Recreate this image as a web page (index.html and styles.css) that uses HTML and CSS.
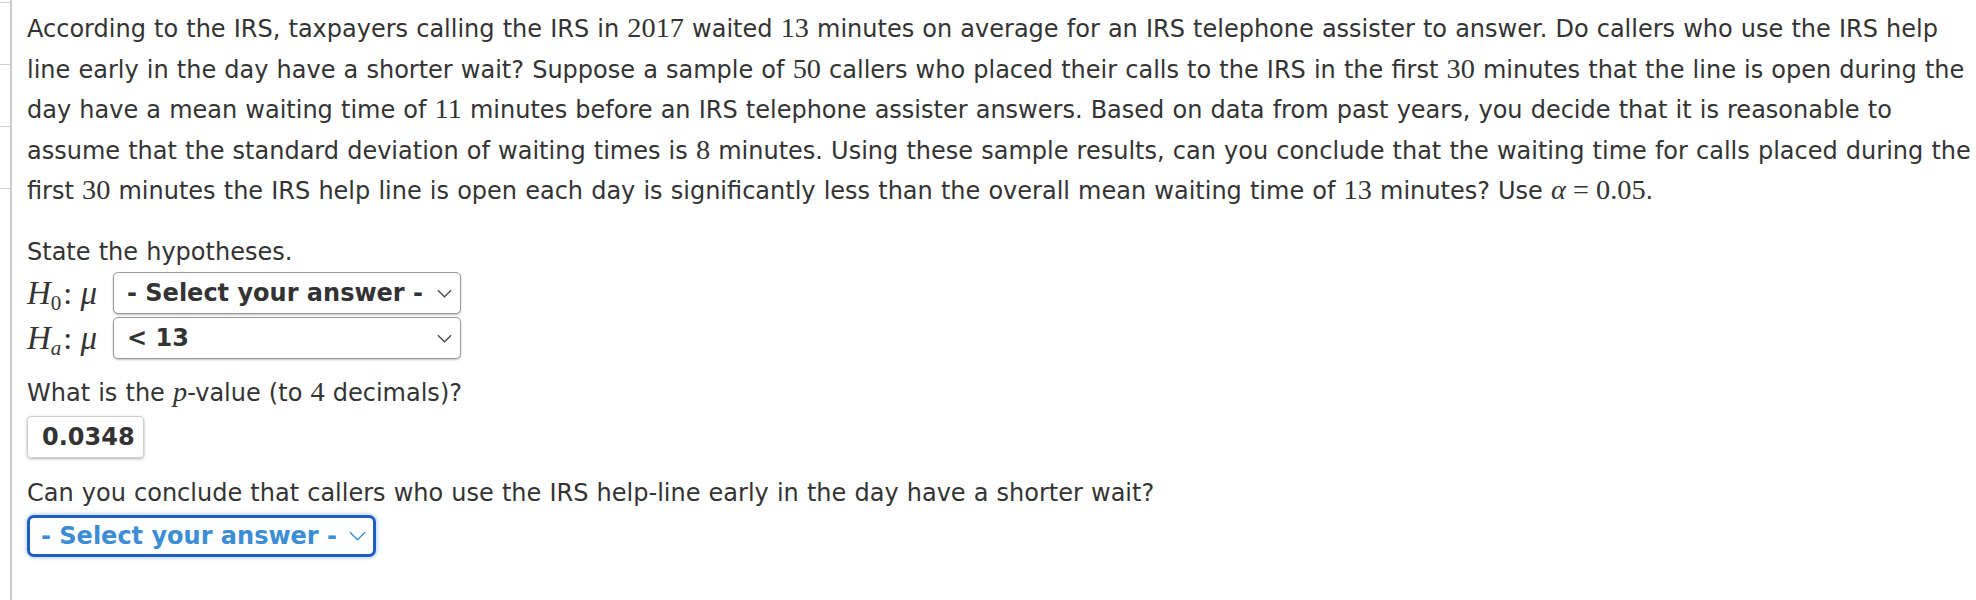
FILE: index.html
```html
<!DOCTYPE html>
<html>
<head>
<meta charset="utf-8">
<link rel="stylesheet" href="styles.css">
</head>
<body>
<div class="page">
  <div class="rail"></div>
  <div class="content">
    <p class="intro">According to the IRS, taxpayers calling the IRS in <span class="m">2017</span> waited <span class="m">13</span> minutes on average for an IRS telephone assister to answer. Do callers who use the IRS help<br>line early in the day have a shorter wait? Suppose a sample of <span class="m">50</span> callers who placed their calls to the IRS in the first <span class="m">30</span> minutes that the line is open during the<br>day have a mean waiting time of <span class="m">11</span> minutes before an IRS telephone assister answers. Based on data from past years, you decide that it is reasonable to<br>assume that the standard deviation of waiting times is <span class="m">8</span> minutes. Using these sample results, can you conclude that the waiting time for calls placed during the<br>first <span class="m">30</span> minutes the IRS help line is open each day is significantly less than the overall mean waiting time of <span class="m">13</span> minutes? Use <span class="m"><i>α</i> = 0.05</span>.</p>

    <p class="label">State the hypotheses.</p>
    <div class="hyp">
      <div class="hyp-row">
        <span class="hyp-label"><i class="mi">H</i><sub class="sub">0</sub><span class="colon">:</span> <i class="mi">μ</i></span>
        <div class="select">
          <span class="select-text">- Select your answer -</span>
          <svg class="chev" viewBox="0 0 16 9" width="15" height="9"><path d="M1 1 L8 8 L15 1" fill="none" stroke="#444" stroke-width="1.3"/></svg>
        </div>
      </div>
      <div class="hyp-row">
        <span class="hyp-label"><i class="mi">H</i><sub class="sub"><i>a</i></sub><span class="colon">:</span> <i class="mi">μ</i></span>
        <div class="select">
          <span class="select-text">&lt; 13</span>
          <svg class="chev" viewBox="0 0 16 9" width="15" height="9"><path d="M1 1 L8 8 L15 1" fill="none" stroke="#444" stroke-width="1.3"/></svg>
        </div>
      </div>
    </div>

    <p class="label q2">What is the <i class="mi">p</i>-value (to <span class="m">4</span> decimals)?</p>
    <div class="answer">0.0348</div>

    <p class="label q3">Can you conclude that callers who use the IRS help-line early in the day have a shorter wait?</p>
    <div class="select focus">
      <span class="select-text">- Select your answer -</span>
      <svg class="chev" viewBox="0 0 18 10" width="17" height="10"><path d="M1 1 L9 9 L17 1" fill="none" stroke="#3b8dd5" stroke-width="1.4"/></svg>
    </div>
  </div>
</div>
</body>
</html>
```

FILE: styles.css
```css
html, body {
  margin: 0;
  padding: 0;
  background: #fff;
}

.page {
  display: flex;
  min-height: 600px;
  font-family: "DejaVu Sans", Verdana, sans-serif;
  font-size: 24px;
  word-spacing: 0.5px;
  color: #333;
}

.rail {
  width: 10px;
  flex: none;
  background-image: repeating-linear-gradient(to bottom, #d0d0d0 0, #d0d0d0 1px, transparent 1px, transparent 62px);
  background-position: 0 2px;
  background-size: 10px 188px;
  background-repeat: no-repeat;
}

.content {
  flex: 1;
  border-left: 2px solid #cccccc;
  padding: 9px 0 0 15px;
}

p {
  margin: 0;
}

.intro {
  line-height: 40.5px;
  white-space: nowrap;
}

.m {
  font-family: "Liberation Serif", "Times New Roman", serif;
  font-size: 1.18em;
  line-height: 1;
  word-spacing: 0;
}

.mi {
  font-family: "Liberation Serif", "Times New Roman", serif;
  font-style: italic;
  font-size: 1.18em;
}

.label {
  line-height: 40.5px;
  margin-top: 20px;
}

.hyp {
  display: flex;
  flex-direction: column;
  gap: 3px;
}

.hyp-row {
  display: flex;
  align-items: center;
}

.hyp-label {
  width: 86px;
  flex: none;
  font-size: 24px;
  line-height: 1;
  white-space: nowrap;
}

.hyp-label .mi {
  font-size: 33px;
}

.sub {
  font-family: "Liberation Serif", serif;
  font-size: 21px;
  vertical-align: -6px;
  line-height: 0;
}

.colon {
  font-family: "Liberation Serif", serif;
  font-size: 32px;
  margin-left: 2px;
}

.select {
  box-sizing: border-box;
  width: 348px;
  height: 42px;
  display: flex;
  align-items: center;
  justify-content: space-between;
  padding: 0 8px 0 13px;
  border: 1px solid #9a9a9a;
  border-radius: 5px;
  box-shadow: 0 1px 2px rgba(0, 0, 0, 0.25);
  background: #fff;
  font-weight: bold;
  word-spacing: 0;
  color: #333;
}

.select-text {
  white-space: nowrap;
}

.q2 {
  margin-top: 13px;
}

.answer {
  box-sizing: border-box;
  width: 117px;
  height: 42px;
  margin-top: 2px;
  padding: 0 0 0 14px;
  display: flex;
  align-items: center;
  border: 1px solid #cfcfcf;
  border-radius: 4px;
  box-shadow: 0 1px 3px rgba(0, 0, 0, 0.3);
  font-weight: bold;
  color: #333;
}

.q3 {
  margin-top: 15px;
}

.select.focus {
  width: 349px;
  margin-top: 2px;
  border: 3px solid #1f5cc5;
  border-radius: 7px;
  padding: 0 7px 0 11px;
  box-shadow: 0 0 3px 2px rgba(110, 165, 230, 0.35);
  color: #3b8dd5;
}
```
